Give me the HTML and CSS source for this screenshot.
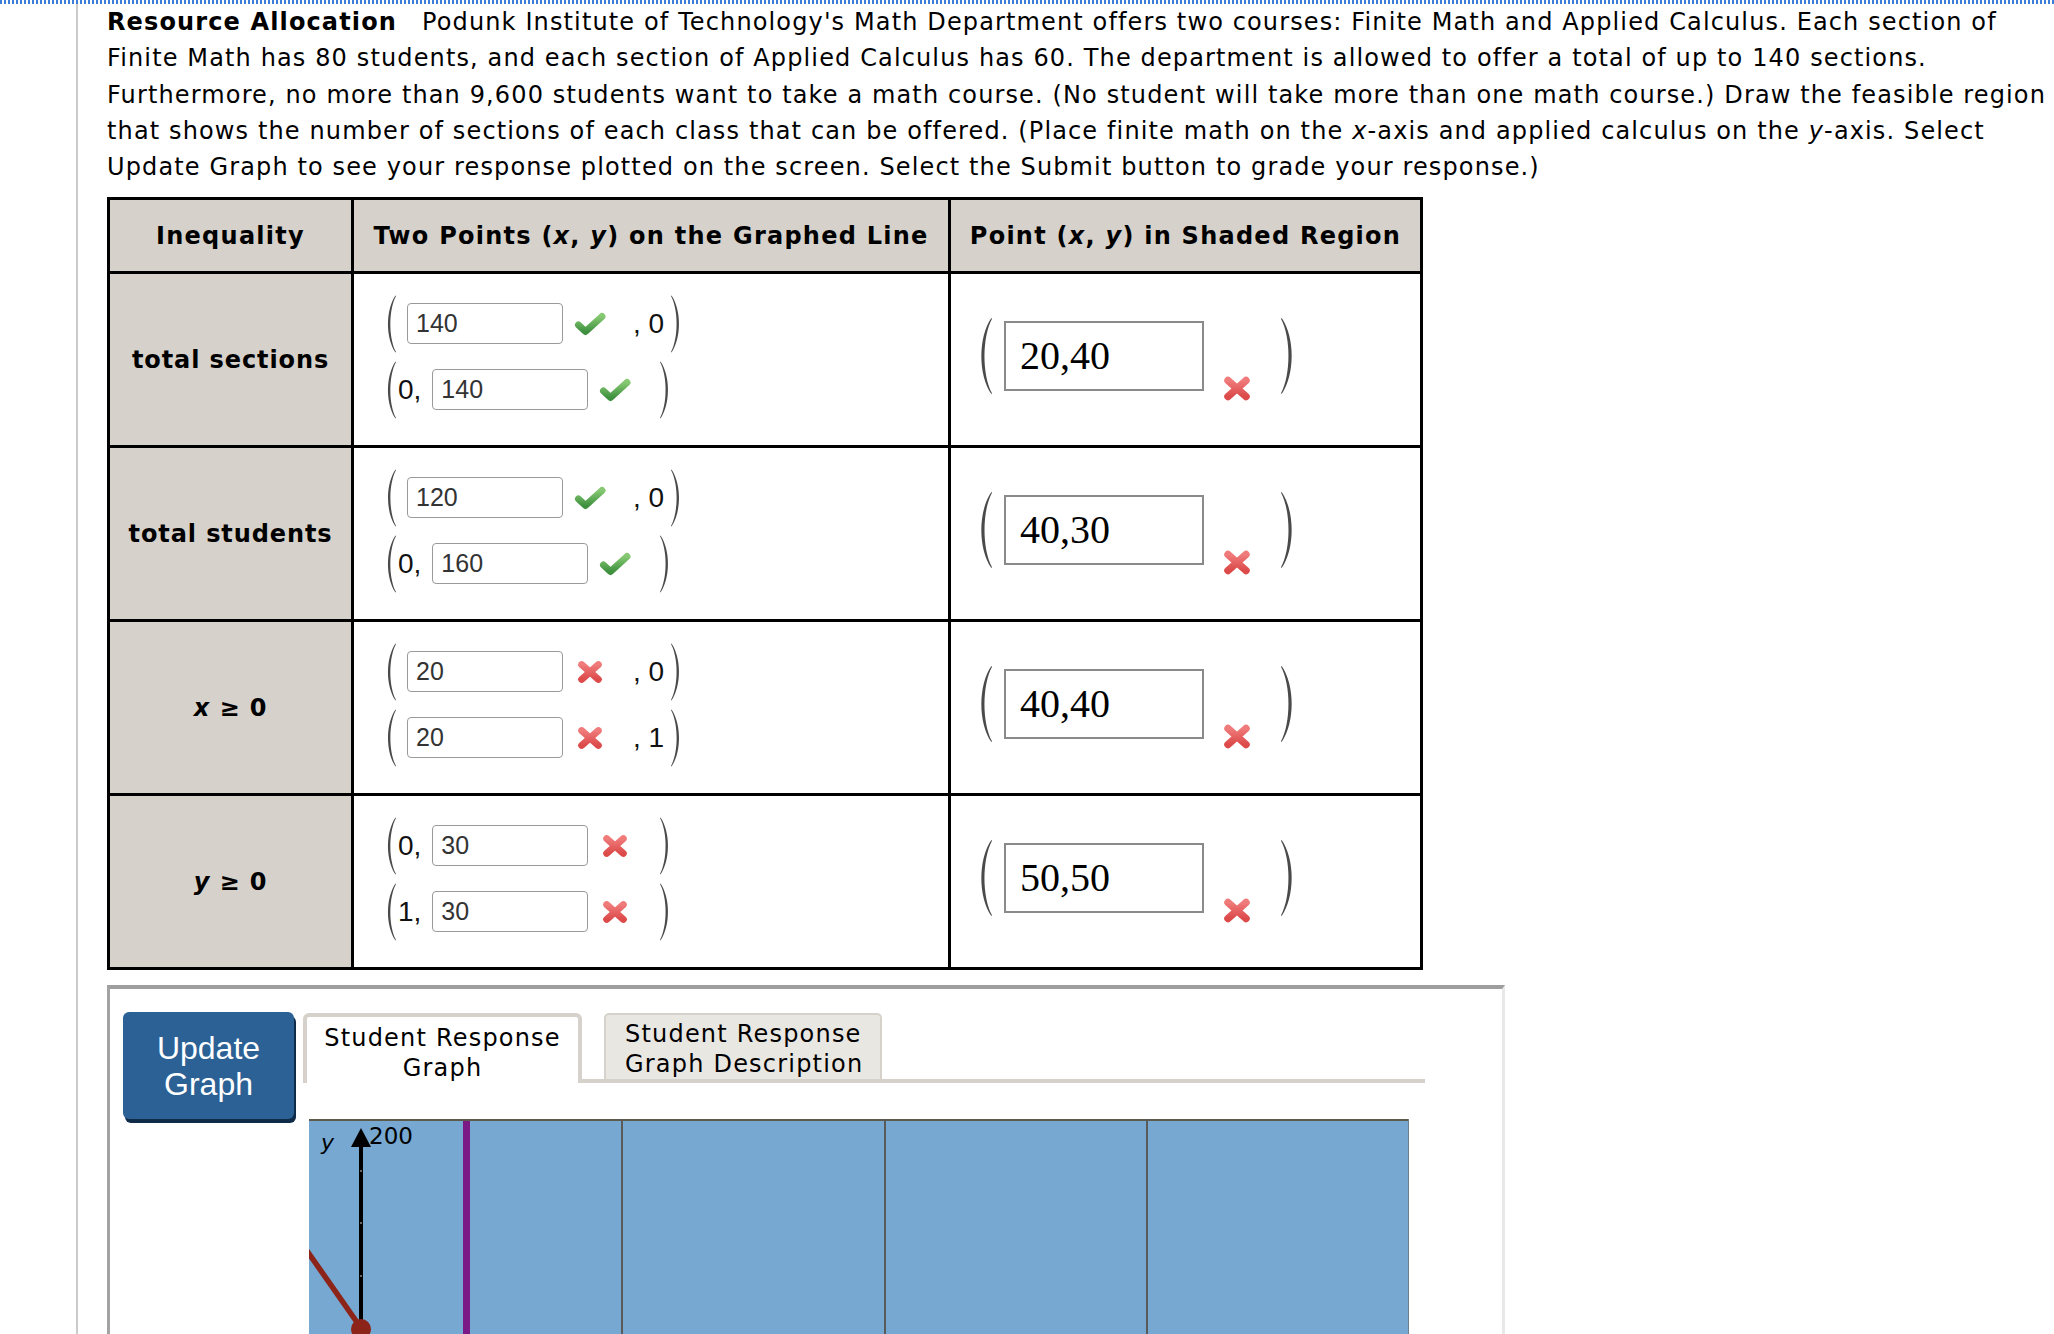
FILE: index.html
```html
<!DOCTYPE html>
<html>
<head>
<meta charset="utf-8">
<title>Resource Allocation</title>
<link rel="stylesheet" href="styles.css">
</head>
<body>
<div class="dots"></div>
<div class="content">
  <p class="question"><b class="title">Resource Allocation</b>Podunk Institute of Technology's Math Department offers two courses: Finite Math and Applied Calculus. Each section of<br>Finite Math has 80 students, and each section of Applied Calculus has 60. The department is allowed to offer a total of up to 140 sections.<br>Furthermore, no more than 9,600 students want to take a math course. (No student will take more than one math course.) Draw the feasible region<br>that shows the number of sections of each class that can be offered. (Place finite math on the <i>x</i>-axis and applied calculus on the <i>y</i>-axis. Select<br>Update Graph to see your response plotted on the screen. Select the Submit button to grade your response.)</p>

  <svg width="0" height="0" class="defs">
    <defs>
      <linearGradient id="gcheck" x1="0" y1="0" x2="0" y2="1">
        <stop offset="0" stop-color="#86c972"/>
        <stop offset="1" stop-color="#3f9140"/>
      </linearGradient>
      <linearGradient id="gx" x1="0" y1="0" x2="0" y2="1">
        <stop offset="0" stop-color="#f07b7b"/>
        <stop offset="1" stop-color="#dc4a4a"/>
      </linearGradient>
      <symbol id="lp" viewBox="0 0 12 58"><path d="M11.5,0.5 C1.5,15 1.5,43 11.5,57.5 L12,57 C4.5,43 4.5,15 12,1 Z" fill="#4a4a4a"/></symbol>
      <symbol id="rp" viewBox="0 0 12 58"><path d="M0.5,0.5 C10.5,15 10.5,43 0.5,57.5 L0,57 C7.5,43 7.5,15 0,1 Z" fill="#4a4a4a"/></symbol>
      <symbol id="ok" viewBox="0 0 32 24"><polyline points="4.5,13 11.5,19.5 28,4.5" fill="none" stroke="url(#gcheck)" stroke-width="7" stroke-linecap="round" stroke-linejoin="round"/></symbol>
      <symbol id="no" viewBox="0 0 30 26"><g stroke="url(#gx)" stroke-width="7.5" stroke-linecap="round"><line x1="6" y1="5" x2="24" y2="21"/><line x1="24" y1="5" x2="6" y2="21"/></g></symbol>
    </defs>
  </svg>

  <table class="ineq">
    <thead>
      <tr>
        <th class="c1">Inequality</th>
        <th class="c2">Two Points (<i>x</i>, <i>y</i>) on the Graphed Line</th>
        <th class="c3">Point (<i>x</i>, <i>y</i>) in Shaded Region</th>
      </tr>
    </thead>
    <tbody>
      <tr>
        <td class="label">total sections</td>
        <td class="pts">
          <div class="pair">
            <div class="pt"><svg class="paren"><use href="#lp"/></svg><span class="field f-a">140</span><svg class="mark"><use href="#ok"/></svg><span class="tail">, 0</span><svg class="paren rp"><use href="#rp"/></svg></div>
            <div class="pt"><svg class="paren"><use href="#lp"/></svg><span class="head">0,</span><span class="field f-b">140</span><svg class="mark"><use href="#ok"/></svg><svg class="paren rp2"><use href="#rp"/></svg></div>
          </div>
        </td>
        <td class="shade"><div class="sp"><svg class="bigparen"><use href="#lp"/></svg><span class="bigfield">20,40</span><svg class="bigmark"><use href="#no"/></svg><svg class="bigparen rbig"><use href="#rp"/></svg></div></td>
      </tr>
      <tr>
        <td class="label">total students</td>
        <td class="pts">
          <div class="pair">
            <div class="pt"><svg class="paren"><use href="#lp"/></svg><span class="field f-a">120</span><svg class="mark"><use href="#ok"/></svg><span class="tail">, 0</span><svg class="paren rp"><use href="#rp"/></svg></div>
            <div class="pt"><svg class="paren"><use href="#lp"/></svg><span class="head">0,</span><span class="field f-b">160</span><svg class="mark"><use href="#ok"/></svg><svg class="paren rp2"><use href="#rp"/></svg></div>
          </div>
        </td>
        <td class="shade"><div class="sp"><svg class="bigparen"><use href="#lp"/></svg><span class="bigfield">40,30</span><svg class="bigmark"><use href="#no"/></svg><svg class="bigparen rbig"><use href="#rp"/></svg></div></td>
      </tr>
      <tr>
        <td class="label"><i>x</i> ≥ 0</td>
        <td class="pts">
          <div class="pair">
            <div class="pt"><svg class="paren"><use href="#lp"/></svg><span class="field f-a">20</span><svg class="mark"><use href="#no"/></svg><span class="tail">, 0</span><svg class="paren rp"><use href="#rp"/></svg></div>
            <div class="pt"><svg class="paren"><use href="#lp"/></svg><span class="field f-a">20</span><svg class="mark"><use href="#no"/></svg><span class="tail">, 1</span><svg class="paren rp"><use href="#rp"/></svg></div>
          </div>
        </td>
        <td class="shade"><div class="sp"><svg class="bigparen"><use href="#lp"/></svg><span class="bigfield">40,40</span><svg class="bigmark"><use href="#no"/></svg><svg class="bigparen rbig"><use href="#rp"/></svg></div></td>
      </tr>
      <tr>
        <td class="label"><i>y</i> ≥ 0</td>
        <td class="pts">
          <div class="pair">
            <div class="pt"><svg class="paren"><use href="#lp"/></svg><span class="head">0,</span><span class="field f-b">30</span><svg class="mark"><use href="#no"/></svg><svg class="paren rp2"><use href="#rp"/></svg></div>
            <div class="pt"><svg class="paren"><use href="#lp"/></svg><span class="head">1,</span><span class="field f-b">30</span><svg class="mark"><use href="#no"/></svg><svg class="paren rp2"><use href="#rp"/></svg></div>
          </div>
        </td>
        <td class="shade"><div class="sp"><svg class="bigparen"><use href="#lp"/></svg><span class="bigfield">50,50</span><svg class="bigmark"><use href="#no"/></svg><svg class="bigparen rbig"><use href="#rp"/></svg></div></td>
      </tr>
    </tbody>
  </table>

  <div class="panel">
    <button class="update">Update<br>Graph</button>
    <div class="graph-area">
      <div class="tabs">
        <div class="tab active">Student Response<br>Graph</div>
        <div class="tab">Student Response<br>Graph Description</div>
      </div>
      <div class="graph">
        <svg class="plot" width="1100" height="420" viewBox="0 0 1100 420">
          <rect x="0" y="0" width="1100" height="420" fill="#76a8d1"/>
          <line x1="0" y1="1" x2="1100" y2="1" stroke="#5e5b4c" stroke-width="2"/>
          <line x1="313" y1="0" x2="313" y2="420" stroke="#5a5a5a" stroke-width="2"/>
          <line x1="576" y1="0" x2="576" y2="420" stroke="#5a5a5a" stroke-width="2"/>
          <line x1="838" y1="0" x2="838" y2="420" stroke="#5a5a5a" stroke-width="2"/>
          <line x1="1099.5" y1="0" x2="1099.5" y2="420" stroke="#6a7f90" stroke-width="1"/>
          <line x1="157.5" y1="2" x2="157.5" y2="420" stroke="#7b1a86" stroke-width="7"/>
          <line x1="52" y1="26" x2="52" y2="420" stroke="#000" stroke-width="4"/>
          <polygon points="52,9 62,28 42,28" fill="#000"/>
          <g fill="#666"><rect x="51" y="51" width="2" height="2"/><rect x="51" y="103" width="2" height="2"/><rect x="51" y="156" width="2" height="2"/></g>
          <text x="60" y="25" class="axis-num">200</text>
          <text x="12" y="31" class="axis-lbl">y</text>
          <line x1="-4" y1="129" x2="52" y2="209" stroke="#8c2419" stroke-width="5.5"/>
          <circle cx="52" cy="210" r="10" fill="#8c2419"/>
        </svg>
      </div>
    </div>
  </div>
</div>
</body>
</html>
```

FILE: styles.css
```css
html, body {
  margin: 0;
  padding: 0;
  background: #fff;
  overflow: hidden;
}
body {
  font-family: "DejaVu Sans", Verdana, sans-serif;
  color: #000;
}
.dots {
  height: 4px;
  background: repeating-linear-gradient(to right, #3b7fd6 0 2px, transparent 2px 4px);
}
.content {
  margin-left: 76px;
  border-left: 2px solid #cbcbcb;
  padding-left: 29px;
  height: 1330px;
}
.question {
  margin: 0;
  font-size: 24px;
  line-height: 36.3px;
  letter-spacing: 1.13px;
  white-space: nowrap;
}
.title {
  margin-right: 25px;
}
.defs {
  position: absolute;
  width: 0;
  height: 0;
}

/* table */
.ineq {
  margin-top: 12px;
  border-collapse: collapse;
  table-layout: fixed;
  width: 1313px;
}
.ineq th, .ineq td {
  border: 3px solid #000;
  padding: 0;
}
.ineq th {
  background: #d6d2cb;
  height: 71px;
  font-size: 24px;
  letter-spacing: 1.25px;
  font-weight: bold;
}
.c1 { width: 241px; }
.c2 { width: 594px; }
.c3 { width: 469px; }
.ineq td {
  height: 171px;
  vertical-align: middle;
}
.label {
  background: #d6d2cb;
  text-align: center;
  font-size: 24px;
  letter-spacing: 0.9px;
  font-weight: bold;
}
.pts {
  padding-left: 30px !important;
}
.pair {
  display: flex;
  flex-direction: column;
  gap: 8px;
  margin-bottom: 6px;
}
.pt {
  display: flex;
  align-items: center;
  height: 58px;
  font-family: "Liberation Sans", Arial, sans-serif;
  font-size: 28px;
  color: #111;
}
.paren {
  width: 12px;
  height: 58px;
  flex: none;
}
.field {
  box-sizing: border-box;
  width: 156px;
  height: 41px;
  border: 1.5px solid #9a9a9a;
  border-radius: 4px;
  padding-left: 8px;
  display: flex;
  align-items: center;
  color: #333;
  font-size: 25px;
  flex: none;
}
.f-a { margin-left: 11px; }
.f-b { margin-left: 11px; }
.head { margin-left: 2px; }
.mark {
  width: 32px;
  height: 24px;
  margin-left: 11px;
  flex: none;
}
.tail {
  margin-left: 27px;
  white-space: pre;
}
.rp { margin-left: 7px; }
.rp2 { margin-left: 29px; }

.shade {
  padding-left: 25px !important;
}
.sp {
  display: flex;
  align-items: center;
  height: 78px;
  margin-bottom: 8px;
}
.bigparen {
  width: 16px;
  height: 78px;
  flex: none;
}
.bigfield {
  box-sizing: border-box;
  width: 200px;
  height: 70px;
  margin-left: 12px;
  border: 2px solid #8a8a8a;
  padding-left: 14px;
  display: flex;
  align-items: center;
  font-family: "Liberation Serif", "Times New Roman", serif;
  font-size: 40px;
  color: #000;
  flex: none;
}
.bigmark {
  width: 30px;
  height: 27px;
  margin-left: 18px;
  align-self: flex-end;
  margin-bottom: -7px;
  flex: none;
}
.rbig { margin-left: 29px; }

/* bottom panel */
.panel {
  margin-top: 15px;
  height: 700px;
  border-top: 4px solid #9e9e9e;
  border-left: 3px solid #a3a3a3;
  border-right: 3px solid #e8e8e8;
  display: flex;
  align-items: flex-start;
  padding: 24px 0 0 13px;
  box-sizing: border-box;
  width: 1398px;
}
.update {
  width: 171px;
  height: 107px;
  flex: none;
  background: #2b6195;
  color: #fff;
  border: none;
  border-radius: 6px;
  box-shadow: 2px 4px 0 #0f2b47;
  font-family: "Liberation Sans", Arial, sans-serif;
  font-size: 32px;
  line-height: 36px;
  padding: 0;
  margin-top: -1px;
}
.graph-area {
  margin-left: 9px;
  width: 1122px;
}
.tabs {
  display: flex;
  align-items: flex-start;
  gap: 22px;
  border-bottom: 4px solid #d6d2cb;
  height: 66px;
}
.tab {
  box-sizing: border-box;
  font-size: 24px;
  letter-spacing: 1.2px;
  line-height: 30px;
  flex: none;
}
.tab.active {
  width: 279px;
  height: 70px;
  border: 4px solid #d6d2cb;
  border-bottom: none;
  border-radius: 6px 6px 0 0;
  background: #fff;
  text-align: center;
  padding-top: 6px;
}
.tab:not(.active) {
  width: 278px;
  height: 66px;
  border: 2px solid #d6d2cb;
  border-bottom: none;
  border-radius: 5px 5px 0 0;
  background: #e9e7e2;
  padding: 4px 0 0 19px;
}
.graph {
  margin: 36px 0 0 6px;
  width: 1100px;
  height: 420px;
}
.plot {
  display: block;
}
.axis-num {
  font-family: "DejaVu Sans", sans-serif;
  font-size: 23px;
  fill: #000;
}
.axis-lbl {
  font-family: "DejaVu Sans", sans-serif;
  font-style: italic;
  font-size: 22px;
  fill: #000;
}
```
